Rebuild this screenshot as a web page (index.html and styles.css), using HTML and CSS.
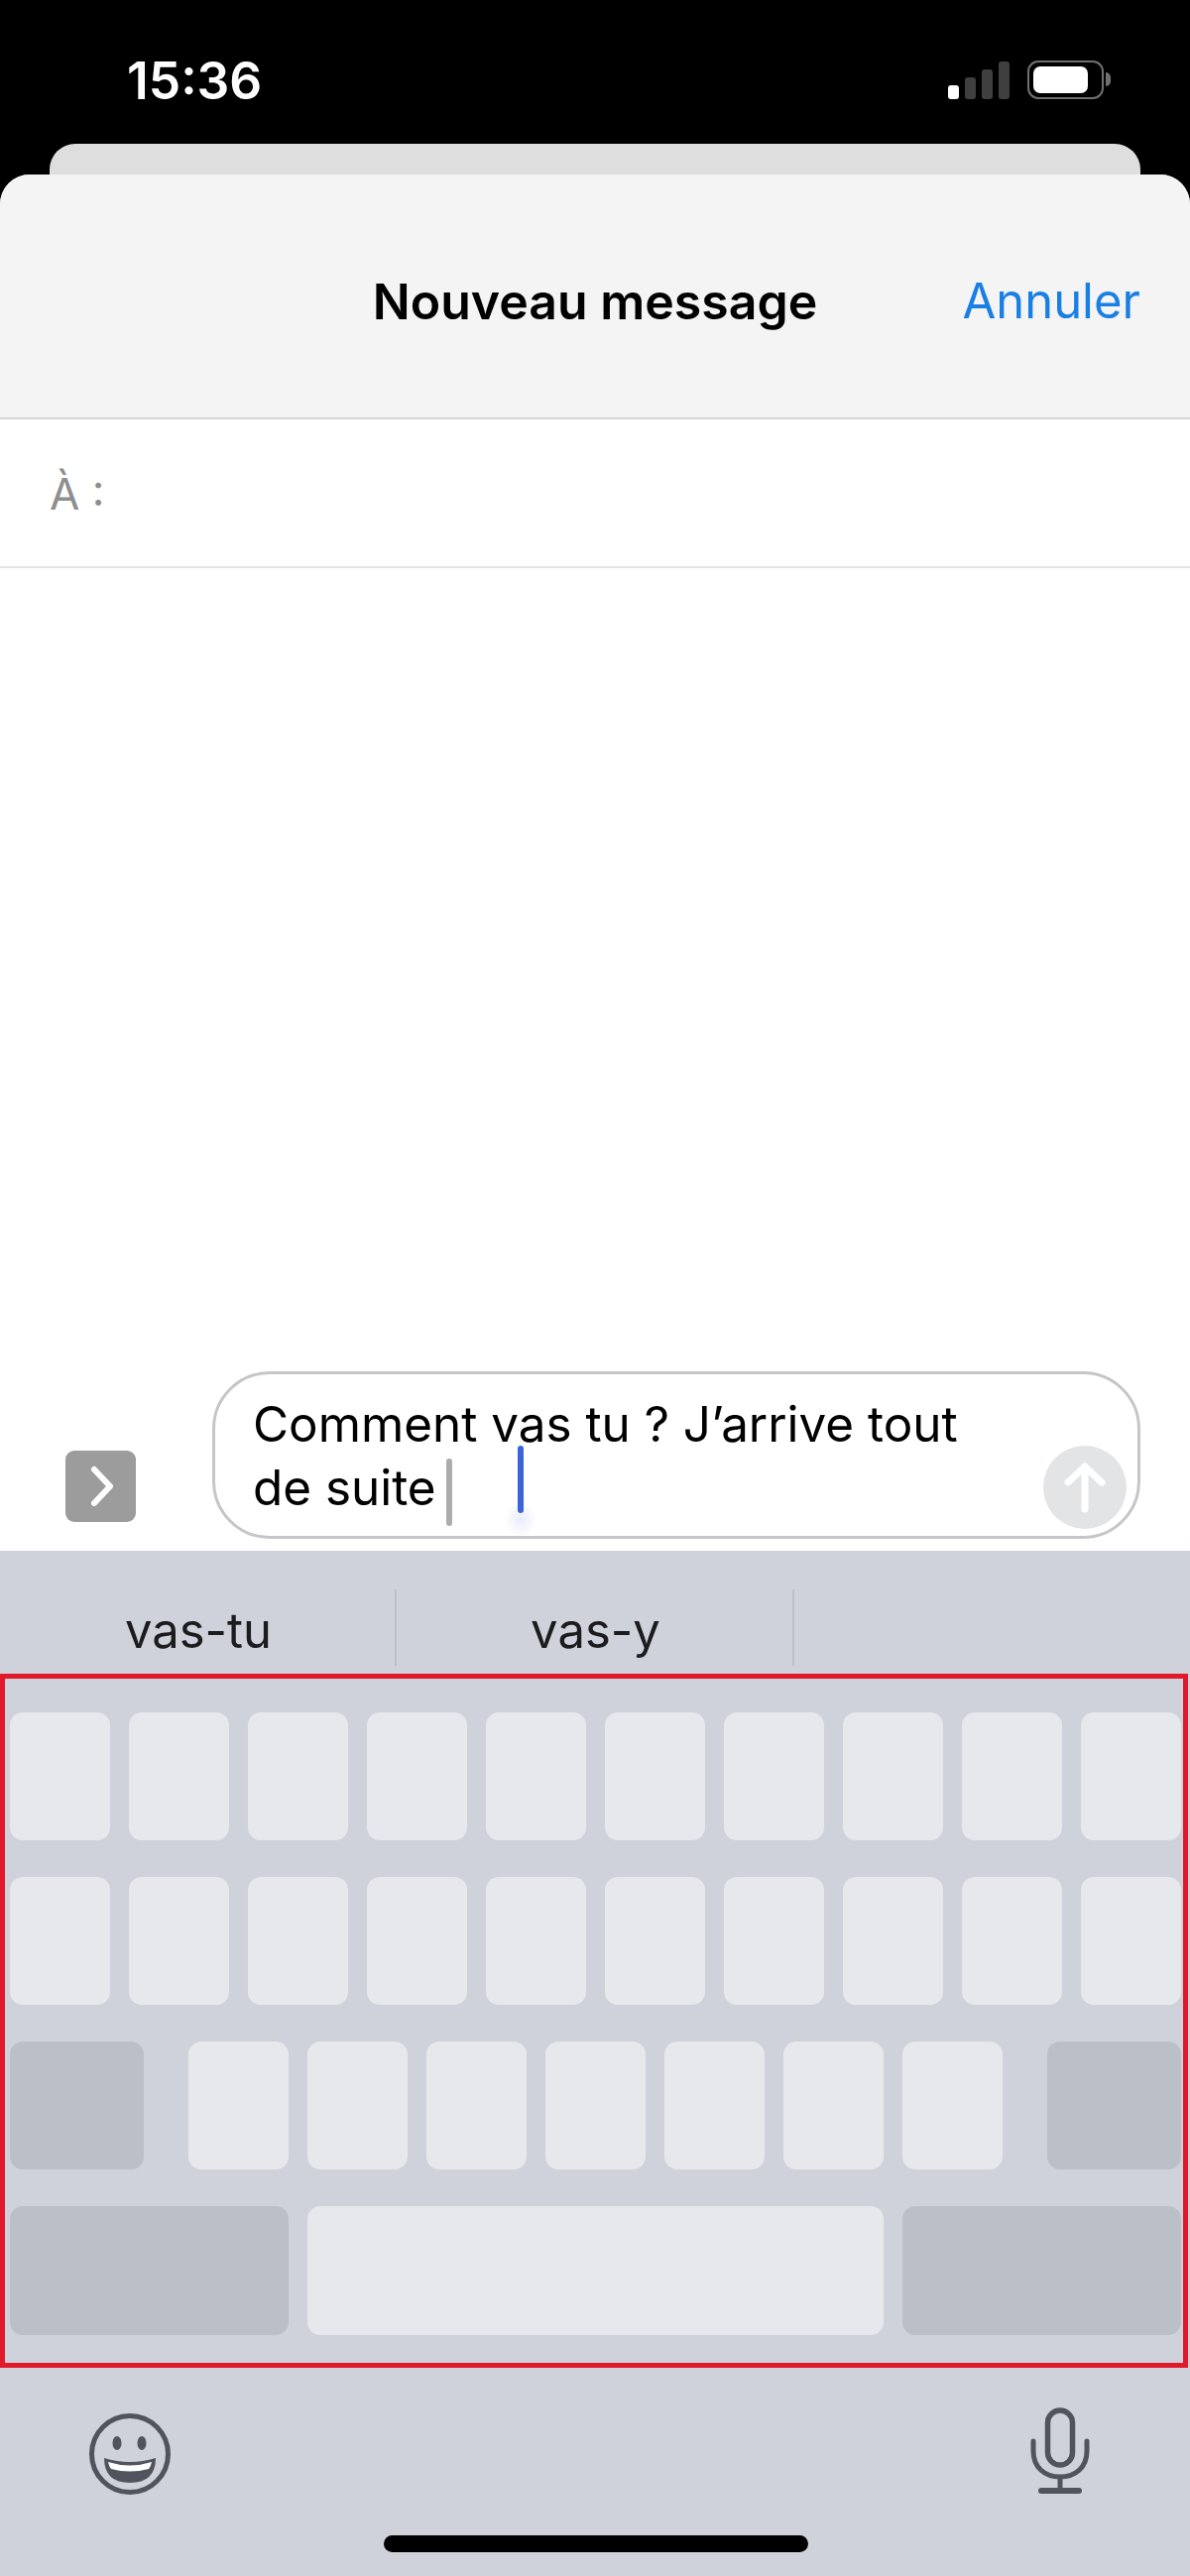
FILE: index.html
```html
<!DOCTYPE html>
<html lang="fr">
<head>
    <meta charset="UTF-8">
    <meta name="viewport" content="width=device-width, initial-scale=1.0">
    <link rel="stylesheet" href="styles.css">
    <title>Nouveau message</title>
</head>
<body>
    <div class="phone">
        <div class="status-bar">
            <span class="time">15:36</span>
            <div class="status-icons">
                <div class="signal">
                    <span class="bar bar-on bar-1"></span>
                    <span class="bar bar-2"></span>
                    <span class="bar bar-3"></span>
                    <span class="bar bar-4"></span>
                </div>
                <div class="battery"><span class="battery-fill"></span></div>
                <span class="battery-nub"></span>
            </div>
        </div>
        <div class="back-card"></div>

        <div class="sheet">
            <div class="sheet-header">
                <span></span>
                <span class="title">Nouveau message</span>
                <span class="cancel">Annuler</span>
            </div>
            <div class="to-row">À :</div>
            <div class="messages">
                <div class="composer">
                    <button class="apps-btn">
                        <svg width="30" height="44" viewBox="0 0 30 44">
                            <path d="M8 5 L24 22 L8 39" fill="none" stroke="#fff" stroke-width="6" stroke-linecap="round" stroke-linejoin="round"/>
                        </svg>
                    </button>
                    <div class="bubble">
                        <div class="bubble-text">Comment vas tu ? J’arrive tout<br>de suite<span class="caret"></span></div>
                        <span class="cursor-glow"></span>
                        <span class="cursor"></span>
                        <span class="send-btn">
                            <svg width="44" height="52" viewBox="0 0 44 52">
                                <path d="M22 48 V5 M5 21 L22 5 L39 21" fill="none" stroke="#fff" stroke-width="7" stroke-linecap="round" stroke-linejoin="round"/>
                            </svg>
                        </span>
                    </div>
                </div>
            </div>
        </div>

        <div class="keyboard">
            <div class="suggestions">
                <div class="suggestion">vas-tu</div>
                <div class="suggestion">vas-y</div>
                <div class="suggestion"></div>
            </div>
            <div class="keys">
                <div class="key-row">
                    <span class="key"></span><span class="key"></span><span class="key"></span><span class="key"></span><span class="key"></span>
                    <span class="key"></span><span class="key"></span><span class="key"></span><span class="key"></span><span class="key"></span>
                </div>
                <div class="key-row">
                    <span class="key"></span><span class="key"></span><span class="key"></span><span class="key"></span><span class="key"></span>
                    <span class="key"></span><span class="key"></span><span class="key"></span><span class="key"></span><span class="key"></span>
                </div>
                <div class="key-row key-row-shift">
                    <span class="key-dark key-shift"></span>
                    <div class="key-group">
                        <span class="key"></span><span class="key"></span><span class="key"></span><span class="key"></span>
                        <span class="key"></span><span class="key"></span><span class="key"></span>
                    </div>
                    <span class="key-dark key-shift"></span>
                </div>
                <div class="key-row key-row-bottom">
                    <span class="key-dark"></span>
                    <span class="key key-space"></span>
                    <span class="key-dark"></span>
                </div>
            </div>
            <div class="keyboard-footer">
                <svg class="emoji-icon" width="82" height="82" viewBox="0 0 82 82">
                    <circle cx="41" cy="41" r="38.5" fill="none" stroke="#50545C" stroke-width="5"/>
                    <ellipse cx="28" cy="30" rx="4.5" ry="7" fill="#50545C"/>
                    <ellipse cx="53" cy="30" rx="4.5" ry="7" fill="#50545C"/>
                    <path d="M15 45 Q41 53 67 45 Q67 70 41 70 Q15 70 15 45 Z" fill="#50545C"/>
                    <path d="M19 49 Q41 56 63 49 Q62 54 60 56 Q41 61 22 56 Q20 54 19 49 Z" fill="#fff"/>
                </svg>
                <svg class="mic-icon" width="60" height="88" viewBox="0 0 60 88">
                    <rect x="17.5" y="3" width="25" height="55" rx="12.5" fill="none" stroke="#50545C" stroke-width="5.5"/>
                    <path d="M3 34 V44 C3 60 14 70 30 70 C46 70 57 60 57 44 V34" fill="none" stroke="#50545C" stroke-width="5" stroke-linecap="round"/>
                    <path d="M30 70 V84" stroke="#50545C" stroke-width="5"/>
                    <path d="M11 84 H49" stroke="#50545C" stroke-width="6" stroke-linecap="round"/>
                </svg>
            </div>
            <div class="home-bar"></div>
        </div>
    </div>
</body>
</html>
```

FILE: styles.css
```css
* {
    box-sizing: border-box;
}

body {
    margin: 0;
    background-color: #000;
    font-family: Inter, "Liberation Sans", sans-serif;
}

.phone {
    display: flex;
    flex-direction: column;
    width: 1200px;
    height: 2598px;
    overflow: hidden;
}

/* status bar */
.status-bar {
    display: flex;
    justify-content: space-between;
    height: 145px;
    padding: 52px 80px 0 128px;
    color: #fff;
}

.time {
    font-size: 51.5px;
    font-weight: 600;
    line-height: 58px;
}

.status-icons {
    display: flex;
    align-items: flex-start;
    padding-top: 9px;
}

.signal {
    display: flex;
    align-items: flex-end;
    gap: 6px;
    height: 39px;
    margin-right: 18px;
}

.bar {
    width: 11px;
    border-radius: 3px;
    background-color: #3f3f3f;
}

.bar-on {
    background-color: #fff;
}

.bar-1 { height: 14px; }
.bar-2 { height: 22px; }
.bar-3 { height: 30px; }
.bar-4 { height: 38px; }

.battery {
    width: 77px;
    height: 39px;
    padding: 4px 14px 4px 4px;
    border: 2px solid #6f6f6f;
    border-radius: 11px;
}

.battery-fill {
    display: block;
    height: 100%;
    border-radius: 7px;
    background-color: #fff;
}

.battery-nub {
    width: 5px;
    height: 14px;
    margin: 12px 0 0 2px;
    border-radius: 0 5px 5px 0;
    background-color: #6f6f6f;
}

.back-card {
    height: 31px;
    margin: 0 50px;
    border-radius: 26px 26px 0 0;
    background-color: #dedede;
}

/* sheet */
.sheet {
    display: flex;
    flex-direction: column;
    height: 1388px;
    border-radius: 30px 30px 0 0;
    background-color: #fff;
}

.sheet-header {
    display: grid;
    grid-template-columns: 1fr auto 1fr;
    align-items: center;
    height: 247px;
    padding: 10px 50px 0;
    border-bottom: 2px solid #d4d4d4;
    border-radius: 30px 30px 0 0;
    background-color: #f4f4f5;
}

.title {
    font-size: 50px;
    font-weight: 600;
    color: #000;
}

.cancel {
    justify-self: end;
    font-size: 49px;
    color: #1a7fe3;
}

.to-row {
    display: flex;
    align-items: center;
    height: 150px;
    padding: 2px 0 0 50px;
    border-bottom: 2px solid #e4e4e4;
    font-size: 44px;
    color: #8e8e8e;
}

.messages {
    display: flex;
    flex: 1;
    flex-direction: column;
    justify-content: flex-end;
    padding-bottom: 12px;
}

.composer {
    display: flex;
    align-items: flex-end;
    gap: 77px;
    padding-left: 66px;
}

.apps-btn {
    display: flex;
    align-items: center;
    justify-content: center;
    width: 71px;
    height: 72px;
    margin-bottom: 17px;
    padding: 0;
    border: none;
    border-radius: 9px;
    background-color: #9c9c9c;
}

.bubble {
    position: relative;
    width: 936px;
    height: 169px;
    padding: 18px 38px 0;
    border: 3px solid #c6c6c8;
    border-radius: 58px;
}

.bubble-text {
    font-size: 49.4px;
    line-height: 64px;
    color: #000;
}

.caret {
    display: inline-block;
    width: 6px;
    height: 68px;
    margin: -10px 0 -10px 10px;
    border-radius: 3px;
    background-color: #adadad;
    vertical-align: -11px;
}

.cursor {
    position: absolute;
    top: 72px;
    left: 305px;
    width: 6px;
    height: 68px;
    border-radius: 3px;
    background-color: #3d63dc;
}

.cursor-glow {
    position: absolute;
    top: 128px;
    left: 292px;
    width: 32px;
    height: 36px;
    background: radial-gradient(ellipse at center, #e9ecfb 0%, rgba(255, 255, 255, 0) 70%);
}

.send-btn {
    position: absolute;
    top: 72px;
    left: 835px;
    display: flex;
    align-items: center;
    justify-content: center;
    width: 84px;
    height: 84px;
    border-radius: 50%;
    background-color: #e3e4e6;
}

/* keyboard */
.keyboard {
    display: flex;
    flex: 1;
    flex-direction: column;
    background-color: #cfd2da;
}

.suggestions {
    display: grid;
    grid-template-columns: 400px 401px 1fr;
    height: 124px;
    padding-top: 39px;
}

.suggestion {
    height: 77px;
    padding-left: 2px;
    border-right: 2px solid #bcbfc7;
    font-size: 49px;
    line-height: 83px;
    text-align: center;
    color: #1c1c1e;
}

.suggestion:last-child {
    border-right: none;
}

.keys {
    display: flex;
    flex-direction: column;
    gap: 37px;
    width: 1198px;
    height: 700px;
    padding: 34px 2px 0 5px;
    border: 5px solid #e0192b;
}

.key-row {
    display: flex;
    gap: 19px;
    height: 129px;
}

.key {
    width: 101px;
    border-radius: 13px;
    background-color: #e7e8ec;
}

.key-dark {
    border-radius: 13px;
    background-color: #bbbfc7;
}

.key-row-shift {
    justify-content: space-between;
    gap: 0;
}

.key-shift {
    width: 135px;
}

.key-group {
    display: flex;
    gap: 19px;
}

.key-row-bottom {
    display: grid;
    grid-template-columns: 281px 1fr 281px;
    height: 130px;
}

.key-space {
    width: auto;
}

.keyboard-footer {
    display: flex;
    align-items: flex-start;
    justify-content: space-between;
    padding: 40px 101px 0 90px;
}

.emoji-icon {
    margin-top: 6px;
}

.home-bar {
    width: 428px;
    height: 17px;
    margin: 41px 0 0 387px;
    border-radius: 9px;
    background-color: #000;
}
```
